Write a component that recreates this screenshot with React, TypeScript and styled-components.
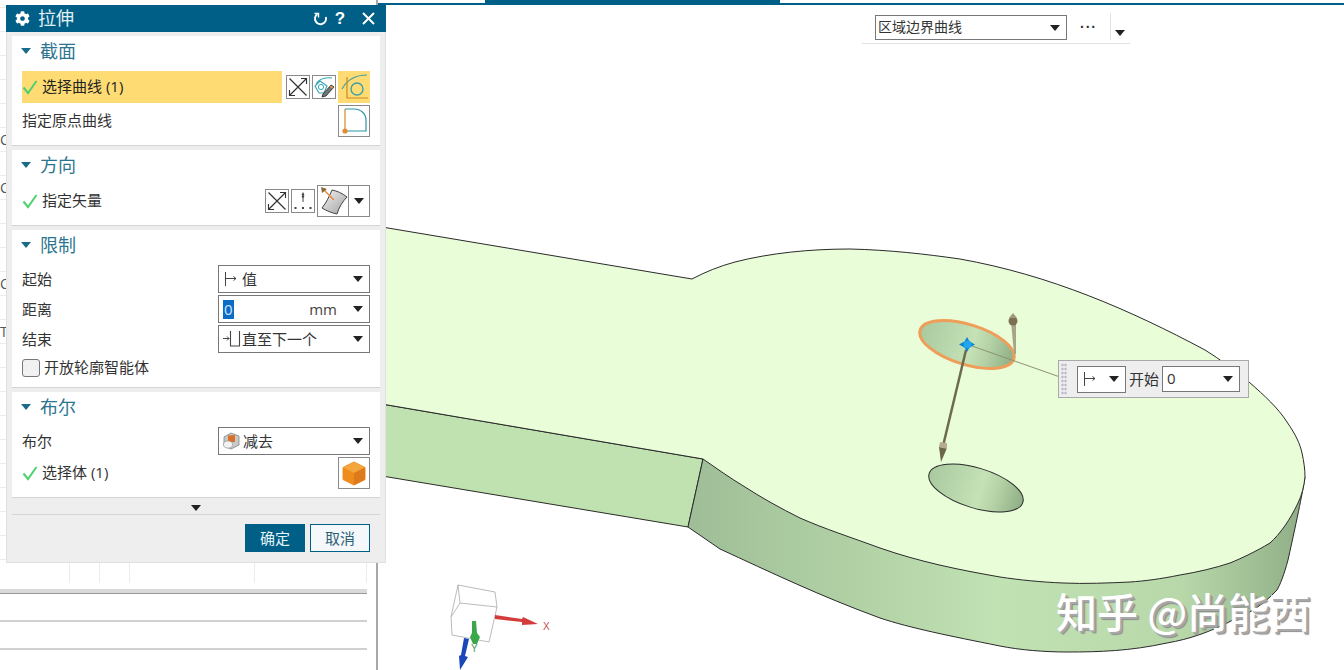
import React from "react";
import styled, { createGlobalStyle } from "styled-components";
import { FaCog } from "react-icons/fa";

const TEAL = "#005f87";
const INK = "#333";

const Global = createGlobalStyle`
  html, body { margin: 0; padding: 0; background: #fff; overflow: hidden; }
  * { box-sizing: border-box; }
  body { font-family: "Open Sans", "Noto Sans CJK SC", sans-serif; color: ${INK}; }
`;

const Shell = styled.div`
  position: relative;
  width: 1344px;
  height: 670px;
  display: grid;
  grid-template-columns: 376px 2px 1fr;
  overflow: hidden;
  background: #fff;
`;

/* background list pane behind the dialog */
const ListPane = styled.div`
  padding-top: 7px;
  display: flex;
  flex-direction: column;
`;
const ListRow = styled.div`
  display: grid;
  grid-template-columns: 70px 30px 30px 125px 112px;
  width: 367px;
  height: 24px;
  border-top: 1px solid #ececec;
  font-size: 14px;
  line-height: 23px;
  color: #555;
`;
const ListCell = styled.div`
  border-right: 1px solid #ececec;
  overflow: hidden;
`;
const Splitter = styled.div`
  width: 367px;
  height: 5px;
  margin-top: 6px;
  background: #d9d9d9;
  border-bottom: 1px solid #999;
`;
const BlankRow = styled.div`
  width: 367px;
  height: 28px;
  border-bottom: 2px solid #d0d0d0;
`;
const PaneLine = styled.div`
  background: #a8a8a8;
`;

/* graphics viewport */
const Viewport = styled.div`
  position: relative;
  display: flex;
  flex-direction: column;
  min-width: 0;
`;
const TabRule = styled.div`
  display: flex;
  align-items: flex-end;
  height: 5px;
  flex: none;
`;
const TabSegment = styled.div<{ $w?: number; $active?: boolean }>`
  flex: ${(p) => (p.$w ? `0 0 ${p.$w}px` : "1")};
  height: ${(p) => (p.$active ? "5px" : "2px")};
  background: ${TEAL};
`;
const Scene = styled.svg`
  display: block;
  flex: 1;
  width: 966px;
  height: 665px;
`;
const SelBar = styled.div`
  position: absolute;
  left: 484px;
  top: 13px;
  width: 268px;
  height: 31px;
  padding: 2px 0 0 13px;
  display: flex;
  align-items: flex-start;
  border-bottom: 1px solid #e2e2e2;
  background: #fff;
`;
const BarText = styled.span`
  flex: 1;
  margin: -3px 0 0 -2px;
`;
const Dots = styled.div`
  width: 43px;
  height: 25px;
  padding-top: 5px;
  text-align: center;
  font-size: 14px;
  line-height: 14px;
  letter-spacing: 1px;
  font-family: "Liberation Sans", sans-serif;
  font-weight: 700;
`;
const BarSep = styled.div`
  width: 1px;
  height: 27px;
  margin-top: -2px;
  background: #e2e2e2;
`;
const BarCaret = styled.div`
  margin: 15px 0 0 4px;
`;
const Float = styled.div`
  position: absolute;
  left: 680px;
  top: 360px;
  width: 191px;
  height: 38px;
  display: flex;
  align-items: center;
  background: #eeeeee;
  border: 1px solid #a9a9a9;
  padding-left: 2px;
`;
const Grip = styled.div`
  width: 6px;
  height: 32px;
  margin-right: 10px;
  background-image: radial-gradient(#bdbdcc 1px, transparent 1.2px);
  background-size: 3px 4px;
`;
const FloatLabel = styled.span`
  font-size: 15px;
  width: 36px;
  margin-top: -2px;
  padding-left: 3px;
  color: #333;
`;
const Watermark = styled.div`
  position: absolute;
  left: 678px;
  top: 582px;
  font-family: "Noto Sans CJK SC", sans-serif;
  font-size: 41px;
  line-height: 56px;
  font-weight: 500;
  white-space: nowrap;
  color: #fff;
  text-shadow: 2px 2px 0 #a8a8a8, 3px 3px 1px #8d8d8d;
`;

/* dialog */
const Dialog = styled.div`
  position: absolute;
  left: 6px;
  top: 5px;
  width: 380px;
  height: 558px;
  display: flex;
  flex-direction: column;
  background: #eeeeee;
  border: 1px solid #e0e0e0;
  border-top: 0;
`;
const TitleBar = styled.div`
  height: 27px;
  margin: 0 -1px;
  flex: none;
  display: flex;
  align-items: center;
  background: ${TEAL};
  color: #eef6fa;
  padding: 0 0 0 9px;
`;
const TitleText = styled.span`
  font-size: 18px;
  line-height: 22px;
  margin: -2px 0 0 8px;
  flex: 1;
  color: #e4f0f5;
`;
const TitleTool = styled.span<{ $w: number }>`
  width: ${(p) => p.$w}px;
  display: flex;
  justify-content: center;
  font: 700 17px/20px "Liberation Sans", sans-serif;
  color: #fff;
`;
const Sections = styled.div`
  padding: 4px 5px 0;
  display: flex;
  flex-direction: column;
  gap: 4px;
`;
const Section = styled.section<{ $h: number }>`
  height: ${(p) => p.$h}px;
  background: #fff;
  border-bottom: 1px solid #d4d4d4;
  padding: 0 10px;
`;
const SectionHead = styled.header`
  height: 28px;
  display: flex;
  align-items: center;
  color: #2c7590;
  font-size: 18px;
  margin-bottom: 7px;
`;
const SectionCaret = styled.i`
  width: 0;
  height: 0;
  border-left: 5px solid transparent;
  border-right: 5px solid transparent;
  border-top: 6px solid #1a6a8a;
  margin: 2px 9px 0 -1px;
`;
const Caret = styled.i`
  display: block;
  flex: none;
  width: 0;
  height: 0;
  border-left: 5px solid transparent;
  border-right: 5px solid transparent;
  border-top: 6px solid #222;
`;
const Row = styled.div`
  display: flex;
  align-items: center;
  height: 32px;
  font-size: 15px;
  color: ${INK};
  & + & {
    margin-top: 2px;
  }
`;
const RowLabel = styled.span`
  margin-top: -3px;
`;
const FieldRow = styled.div`
  display: flex;
  align-items: center;
  height: 30px;
  padding-bottom: 2px;
  font-size: 15px;
  color: ${INK};
`;
const Highlight = styled.div`
  width: 260px;
  height: 32px;
  display: flex;
  align-items: center;
  background: #ffdc73;
  color: #222;
`;
const Check = styled.svg`
  width: 16px;
  height: 16px;
  margin-right: 4px;
  flex: none;
`;
const Spacer = styled.div`
  flex: 1;
`;
const IconBtn = styled.div<{ $size?: number; $hi?: boolean; $ml?: number }>`
  width: ${(p) => p.$size ?? 24}px;
  height: ${(p) => p.$size ?? 24}px;
  margin-left: ${(p) => p.$ml ?? 0}px;
  flex: none;
  display: flex;
  align-items: center;
  justify-content: center;
  background: ${(p) => (p.$hi ? "#ffdc73" : "#fff")};
  border: 1px solid ${(p) => (p.$hi ? "#ffdc73" : "#8a8a8a")};
`;
const SplitBtn = styled.div`
  width: 53px;
  height: 32px;
  margin-left: 2px;
  display: flex;
  border: 1px solid #8a8a8a;
`;
const SplitMain = styled.div`
  width: 31px;
  border-right: 1px solid #8a8a8a;
  display: flex;
  align-items: center;
  justify-content: center;
`;
const SplitArrow = styled.div`
  flex: 1;
  display: flex;
  align-items: center;
  justify-content: center;
`;
const FieldLabel = styled.span`
  width: 196px;
  flex: none;
  margin-top: -2px;
`;
const Select = styled.div<{ $w?: number; $h?: number }>`
  width: ${(p) => p.$w ?? 152}px;
  height: ${(p) => p.$h ?? 28}px;
  flex: none;
  display: flex;
  align-items: center;
  border: 1px solid #777;
  background: #fff;
  padding: 0 6px 0 4px;
  font-size: 15px;
  color: ${INK};
  white-space: nowrap;
`;
const BarSelect = styled(Select)`
  font-size: 14px;
`;
const SelectText = styled.span<{ $ml?: number }>`
  flex: 1;
  margin: -2px 0 0 ${(p) => p.$ml ?? 3}px;
`;
const SelText = styled.span`
  background: #0a6cc4;
  color: #cfe6ff;
  padding: 0 1px;
  line-height: 19px;
`;
const Unit = styled.span`
  margin: 0 16px 0 auto;
  color: #444;
`;
const CheckRow = styled.label`
  display: flex;
  align-items: center;
  height: 26px;
  font-size: 15px;
`;
const CheckBox = styled.span`
  width: 18px;
  height: 18px;
  margin-right: 4px;
  border: 1px solid #777;
  border-radius: 3px;
  background: #f1f1f1;
`;
const ExpandBar = styled.div`
  height: 17px;
  margin: 0 5px;
  padding-top: 3px;
  display: flex;
  justify-content: center;
  align-items: center;
  border-bottom: 1px solid #d6d6d6;
`;
const Footer = styled.div`
  display: flex;
  justify-content: flex-end;
  gap: 5px;
  padding: 9px 15px 0 0;
`;
const Btn = styled.div<{ $primary?: boolean }>`
  width: 60px;
  height: 28px;
  padding-bottom: 2px;
  display: flex;
  align-items: center;
  justify-content: center;
  font-size: 15px;
  background: ${(p) => (p.$primary ? TEAL : "#f4f8fa")};
  color: ${(p) => (p.$primary ? "#e8f4f8" : "#2f5f75")};
  border: 1px solid ${TEAL};
`;

/* drawn icons */
const Tick = () => (
  <Check viewBox="0 0 16 16">
    <path d="M1.5 8.5 L6 14 L14.5 2" fill="none" stroke="#4cd070" strokeWidth="2" />
  </Check>
);
const CrossArrows = () => (
  <svg width="20" height="20" viewBox="0 0 20 20" fill="none" stroke="#333" strokeWidth="1.15">
    <path d="M1.5 1.5 L18.5 18.5 M18.5 1.5 L1.5 18.5" />
    <path d="M13 1.5 H18.5 V7 M1.5 13 V18.5 H7" />
  </svg>
);
const PencilSketch = () => (
  <svg width="22" height="22" viewBox="0 0 22 22" fill="none">
    <path d="M3 8 C6 3 12 1 19 2" stroke="#36a3b8" strokeWidth="1.1" />
    <path d="M7 5 L2 10 L6 17 H11 L14 10 Z" stroke="#36a3b8" strokeWidth="1.1" />
    <circle cx="8" cy="11" r="2.6" stroke="#36a3b8" strokeWidth="1" />
    <path d="M10 18 L18 9 L21 11 L13 20 L9 21 Z" fill="#777" stroke="#222" strokeWidth=".8" />
    <path d="M17 10 L20 12" stroke="#f0a030" strokeWidth="1.5" />
  </svg>
);
const CurveCircle = () => (
  <svg width="30" height="30" viewBox="0 0 30 30" fill="none">
    <path d="M3 17 C8 8 16 3 28 3" stroke="#3f9fa6" strokeWidth="1.2" />
    <circle cx="18" cy="17" r="6" stroke="#3f9fa6" strokeWidth="1.4" />
    <path d="M8 5 V26 H29" stroke="#c88a20" strokeWidth="1.2" />
  </svg>
);
const OriginCurve = () => (
  <svg width="30" height="30" viewBox="0 0 30 30" fill="none">
    <path d="M6 25 H27 V14 C27 8 22 3 15 3 H6" stroke="#2c93aa" strokeWidth="1.2" />
    <path d="M6 3 V24" stroke="#d08a20" strokeWidth="1.2" />
    <circle cx="6" cy="25" r="2.6" fill="#e68a2e" />
  </svg>
);
const PointArrow = () => (
  <svg width="20" height="20" viewBox="0 0 20 20">
    <path d="M10 1 L11.5 4 H10.5 V11 H9.5 V4 H8.5 Z" fill="#444" />
    <circle cx="10" cy="5.5" r="1.2" fill="#444" />
    <g fill="#444">
      <rect x="1.5" y="16" width="2" height="2" />
      <rect x="9" y="16" width="2" height="2" />
      <rect x="16.5" y="16" width="2" height="2" />
    </g>
  </svg>
);
const SurfaceVector = () => (
  <svg width="29" height="29" viewBox="0 0 29 29">
    <defs>
      <linearGradient id="sv" x1="0" y1="0" x2="1" y2="1">
        <stop offset="0" stopColor="#f4f4f4" />
        <stop offset="1" stopColor="#a0a0a0" />
      </linearGradient>
    </defs>
    <path d="M13 3 C18 4 23 6 28 10 C24 14 20 20 18 27 C13 26 8 24 3 21 C7 16 10 10 13 3 Z" fill="url(#sv)" stroke="#444" strokeWidth="1" />
    <path d="M4 2 L15 13" stroke="#e8873a" strokeWidth="1.4" />
    <path d="M2 0 L8 2 L3 6 Z" fill="#8a6a3a" />
  </svg>
);
const ValueIcon = () => (
  <svg width="16" height="16" viewBox="0 0 16 16" fill="none" stroke="#444" strokeWidth="1">
    <path d="M2.5 1 V15 M3 7.5 H13 M10.5 5.5 L13 7.5 L10.5 9.5" />
  </svg>
);
const UntilIcon = () => (
  <svg width="18" height="18" viewBox="0 0 18 18" fill="none" stroke="#444" strokeWidth="1">
    <path d="M0 8.5 H6 M4 6.5 L6 8.5 L4 10.5" />
    <path d="M7.5 1 V16 H16.5 V1" strokeWidth="1.1" />
  </svg>
);
const BoolIcon = () => (
  <svg width="17" height="18" viewBox="0 0 17 18">
    <path d="M1 5 L8 1 L16 4 V13 L8 17 L1 14 Z" fill="#c9c9c9" stroke="#777" strokeWidth=".7" />
    <path d="M5 3.5 L12 3 L12 10 L5 10 Z" fill="#d9702a" />
    <ellipse cx="5" cy="12.5" rx="4.5" ry="3.6" fill="#f3f3f3" stroke="#999" strokeWidth=".7" />
  </svg>
);
const CubeIcon = () => (
  <svg width="24" height="25" viewBox="0 0 24 25">
    <path d="M12 1 L23 6.5 V18.5 L12 24 L1 18.5 V6.5 Z" fill="#ef8c1e" stroke="#ef8c1e" strokeLinejoin="round" />
    <path d="M12 1 L23 6.5 L12 12 L1 6.5 Z" fill="#f4a53e" />
    <path d="M12 12 L23 6.5 V18.5 L12 24 Z" fill="#dc7a1c" />
  </svg>
);
const ResetIcon = () => (
  <svg width="15" height="15" viewBox="0 0 15 15" fill="none" stroke="#fff" strokeWidth="2">
    <path d="M4.3 3.2 A5.5 5.5 0 1 0 12.8 6" />
    <path d="M1.5 2.5 H5.5 V6.5" strokeWidth="1.4" />
  </svg>
);
const CloseIcon = () => (
  <svg width="13" height="13" viewBox="0 0 13 13" stroke="#fff" strokeWidth="2">
    <path d="M1 1 L12 12 M12 1 L1 12" />
  </svg>
);

const LIST_TEXT: Record<number, string> = { 5: "C", 7: "C", 11: "C", 13: "T(" };

const Section3D = () => (
  <Scene viewBox="378 5 966 665">
    <defs>
      <linearGradient id="side" gradientUnits="userSpaceOnUse" x1="690" y1="0" x2="1305" y2="0">
        <stop offset="0" stopColor="#9fbe98" />
        <stop offset="0.25" stopColor="#b0d0a4" />
        <stop offset="0.5" stopColor="#c1e2b3" />
        <stop offset="0.8" stopColor="#b8d8aa" />
        <stop offset="1" stopColor="#8fae86" />
      </linearGradient>
      <linearGradient id="hole" x1="0" y1="0" x2="1" y2="0">
        <stop offset="0" stopColor="#aac99f" />
        <stop offset="0.55" stopColor="#c4e2b6" />
        <stop offset="0.72" stopColor="#b4d2a6" />
        <stop offset="1" stopColor="#8fae85" />
      </linearGradient>
    </defs>

    <path d="M370 402 L703 459 L688 527 L370 474 Z" fill="#bfe2b0" stroke="#2a2a2a" strokeWidth="1" />
    <path
      d="M703 459 L1305 477 C1303 490 1298 515 1288 560 C1284 575 1280 585 1277 590 C1262 606 1248 614 1233 620 C1210 632 1190 639 1167 643 C1130 651 1100 652 1067 652 C1045 652 1020 650 1000 646 C950 636 910 628 880 618 C820 596 770 572 720 549 L688 527 Z"
      fill="url(#side)"
      stroke="#2a2a2a"
      strokeWidth="1"
    />
    <path
      d="M370 225 L692 279 C705 272 720 266 735 262 C770 253 810 249 850 249 C890 250 925 254 960 259 C1050 275 1130 310 1205 350 C1220 359 1235 371 1249 382 C1265 396 1278 408 1287 422 C1296 435 1300 444 1302 453 C1304 462 1305 470 1305 477 C1304 486 1302 495 1298 503 C1290 520 1280 534 1270 543 C1255 552 1242 558 1230 563 C1215 568 1198 572 1180 575 C1160 579 1145 581 1130 582 C1108 583 1085 584 1063 583 C1040 582 1020 580 1000 577 C960 570 920 562 880 548 C850 537 825 529 800 518 C780 508 762 498 745 487 C730 478 716 468 703 459 L370 402 Z"
      fill="#e9fdd8"
      stroke="#2a2a2a"
      strokeWidth="1"
    />

    <ellipse cx="976" cy="488" rx="49" ry="20" transform="rotate(17 976 488)" fill="url(#hole)" stroke="#2a2a2a" strokeWidth="1" />
    <ellipse cx="967" cy="344.5" rx="49" ry="20" transform="rotate(17 967 344.5)" fill="url(#hole)" stroke="#ee9e58" strokeWidth="3" />

    <path d="M972 346 L1060 377" stroke="#8d9270" strokeWidth="1" />
    <path d="M966 350 L943 446" stroke="#6d6a50" strokeWidth="2.5" />
    <path d="M939 447 L947 448 L941 462 Z" fill="#6c6548" />
    <path d="M939 447 L940 442 L947 443 L947 449 Z" fill="#b5ad90" />
    <path d="M1011 322 L1016 322 L1016 354 L1014 354 Z" fill="#a8a488" />
    <circle cx="1013" cy="321" r="4.5" fill="#7b7152" />
    <path d="M1009 318 L1013 313 L1017 318 Z" fill="#a09a7a" />
    <path d="M967 337 L969.5 341.5 L975 344.5 L969.5 347.5 L967 352 L964.5 347.5 L959 344.5 L964.5 341.5 Z" fill="#0f7fd0" />
    <circle cx="967.5" cy="344.5" r="4" fill="#1ea6ee" />

    <g fill="none" stroke="#a9a9a9" strokeWidth=".8">
      <path d="M458 585 L495 592 L497 607 L489 642 L452 635 L451 617 Z" />
      <path d="M451 617 L460 603 L497 607 M460 603 L458 585" />
    </g>
    <path d="M495 615 L522 619 L523 617 L538 624 L522 625 L522 622 L495 619 Z" fill="#d43c3c" />
    <path d="M464 638 L469 639 L465 656 L468 657 L460 670 L459 656 L461 655 Z" fill="#1a48b8" />
    <path d="M472 621 H476 L477 633 L480 637 L477 644 H473 L470 637 L472 633 Z" fill="#3aa84a" />
    <text x="543" y="630" fontFamily="Liberation Sans, sans-serif" fontSize="10" fill="#c05050">X</text>
    <text x="471" y="652" fontFamily="Liberation Sans, sans-serif" fontSize="10" fill="#4a9a5a">Y</text>
  </Scene>
);

export default function App() {
  return (
    <>
      <Global />
      <Shell>
        <ListPane>
          {Array.from({ length: 24 }, (_, i) => (
            <ListRow key={i}>
              <ListCell>{LIST_TEXT[i] ?? ""}</ListCell>
              <ListCell />
              <ListCell />
              <ListCell />
              <ListCell />
            </ListRow>
          ))}
          <Splitter />
          <BlankRow />
          <BlankRow />
        </ListPane>
        <PaneLine />
        <Viewport>
          <TabRule>
            <TabSegment $w={107} />
            <TabSegment $w={295} $active />
            <TabSegment />
          </TabRule>
          <Section3D />
          <SelBar>
            <BarSelect $w={192} $h={25}>
              <BarText>区域边界曲线</BarText>
              <Caret />
            </BarSelect>
            <Dots>···</Dots>
            <BarSep />
            <BarCaret>
              <Caret />
            </BarCaret>
          </SelBar>
          <Float>
            <Grip />
            <Select $w={49} $h={27}>
              <ValueIcon />
              <Spacer />
              <Caret />
            </Select>
            <FloatLabel>开始</FloatLabel>
            <Select $w={78} $h={26}>
              <SelectText $ml={0}>0</SelectText>
              <Caret />
            </Select>
          </Float>
          <Watermark>知乎 @尚能西</Watermark>
        </Viewport>

        <Dialog>
          <TitleBar>
            <FaCog size={15} color="#fff" />
            <TitleText>拉伸</TitleText>
            <TitleTool $w={20}><ResetIcon /></TitleTool>
            <TitleTool $w={20}>?</TitleTool>
            <TitleTool $w={36}><CloseIcon /></TitleTool>
          </TitleBar>
          <Sections>
            <Section $h={110}>
              <SectionHead>
                <SectionCaret />
                截面
              </SectionHead>
              <Row>
                <Highlight>
                  <Tick />
                  <RowLabel>选择曲线 (1)</RowLabel>
                </Highlight>
                <IconBtn $ml={4}><CrossArrows /></IconBtn>
                <IconBtn $ml={2}><PencilSketch /></IconBtn>
                <IconBtn $ml={2} $size={32} $hi><CurveCircle /></IconBtn>
              </Row>
              <Row>
                <RowLabel>指定原点曲线</RowLabel>
                <Spacer />
                <IconBtn $size={32}><OriginCurve /></IconBtn>
              </Row>
            </Section>
            <Section $h={76}>
              <SectionHead>
                <SectionCaret />
                方向
              </SectionHead>
              <Row>
                <Tick />
                <RowLabel>指定矢量</RowLabel>
                <Spacer />
                <IconBtn><CrossArrows /></IconBtn>
                <IconBtn $ml={2}><PointArrow /></IconBtn>
                <SplitBtn>
                  <SplitMain><SurfaceVector /></SplitMain>
                  <SplitArrow><Caret /></SplitArrow>
                </SplitBtn>
              </Row>
            </Section>
            <Section $h={158}>
              <SectionHead>
                <SectionCaret />
                限制
              </SectionHead>
              <FieldRow>
                <FieldLabel>起始</FieldLabel>
                <Select>
                  <ValueIcon />
                  <SelectText>值</SelectText>
                  <Caret />
                </Select>
              </FieldRow>
              <FieldRow>
                <FieldLabel>距离</FieldLabel>
                <Select>
                  <SelText>0</SelText>
                  <Unit>mm</Unit>
                  <Caret />
                </Select>
              </FieldRow>
              <FieldRow>
                <FieldLabel>结束</FieldLabel>
                <Select>
                  <UntilIcon />
                  <SelectText $ml={1}>直至下一个</SelectText>
                  <Caret />
                </Select>
              </FieldRow>
              <CheckRow>
                <CheckBox />
                <RowLabel>开放轮廓智能体</RowLabel>
              </CheckRow>
            </Section>
            <Section $h={106}>
              <SectionHead>
                <SectionCaret />
                布尔
              </SectionHead>
              <FieldRow>
                <FieldLabel>布尔</FieldLabel>
                <Select>
                  <BoolIcon />
                  <SelectText>减去</SelectText>
                  <Caret />
                </Select>
              </FieldRow>
              <Row>
                <Tick />
                <RowLabel>选择体 (1)</RowLabel>
                <Spacer />
                <IconBtn $size={32}><CubeIcon /></IconBtn>
              </Row>
            </Section>
          </Sections>
          <ExpandBar>
            <Caret />
          </ExpandBar>
          <Footer>
            <Btn $primary>确定</Btn>
            <Btn>取消</Btn>
          </Footer>
        </Dialog>
      </Shell>
    </>
  );
}
